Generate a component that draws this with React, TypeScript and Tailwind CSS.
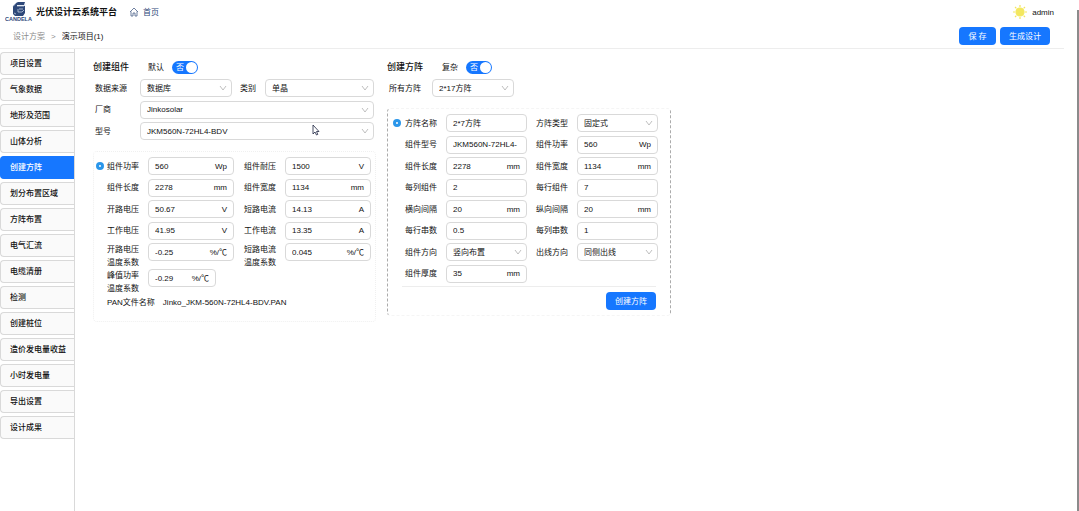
import React, { useState } from "react";

const navItems = [
  "项目设置", "气象数据", "地形及范围", "山体分析", "创建方阵", "划分布置区域", "方阵布置", "电气汇流",
  "电缆清册", "检测", "创建桩位", "造价发电量收益", "小时发电量", "导出设置", "设计成果",
];

type FieldData = { label: string; value: string; unit?: string; select?: boolean };

const moduleFields: FieldData[] = [
  { label: "组件功率", value: "560", unit: "Wp" },
  { label: "组件耐压", value: "1500", unit: "V" },
  { label: "组件长度", value: "2278", unit: "mm" },
  { label: "组件宽度", value: "1134", unit: "mm" },
  { label: "开路电压", value: "50.67", unit: "V" },
  { label: "短路电流", value: "14.13", unit: "A" },
  { label: "工作电压", value: "41.95", unit: "V" },
  { label: "工作电流", value: "13.35", unit: "A" },
];

const coefficientFields: FieldData[] = [
  { label: "开路电压温度系数", value: "-0.25", unit: "%/℃" },
  { label: "短路电流温度系数", value: "0.045", unit: "%/℃" },
  { label: "峰值功率温度系数", value: "-0.29", unit: "%/℃" },
];

const arrayFields: FieldData[] = [
  { label: "方阵名称", value: "2*7方阵" },
  { label: "方阵类型", value: "固定式", select: true },
  { label: "组件型号", value: "JKM560N-72HL4-" },
  { label: "组件功率", value: "560", unit: "Wp" },
  { label: "组件长度", value: "2278", unit: "mm" },
  { label: "组件宽度", value: "1134", unit: "mm" },
  { label: "每列组件", value: "2" },
  { label: "每行组件", value: "7" },
  { label: "横向间隔", value: "20", unit: "mm" },
  { label: "纵向间隔", value: "20", unit: "mm" },
  { label: "每行串数", value: "0.5" },
  { label: "每列串数", value: "1" },
  { label: "组件方向", value: "竖向布置", select: true },
  { label: "出线方向", value: "同侧出线", select: true },
  { label: "组件厚度", value: "35", unit: "mm" },
];

function SelectBox({ id, value, className = "" }: { id: string; value: string; className?: string }) {
  return (
    <div className={"relative " + className}>
      <select
        id={id}
        className="block h-[18px] w-full appearance-none rounded border border-[#d9d9d9] bg-white pl-1.5 pr-3 outline-none"
      >
        <option>{value}</option>
      </select>
      <svg
        viewBox="0 0 8 6"
        className="pointer-events-none absolute right-[5px] top-1/2 h-[6px] w-2 -translate-y-1/2"
        fill="none"
        stroke="#b8b8b8"
        strokeWidth="0.9"
      >
        <path d="M1 1l3 4 3-4" />
      </svg>
    </div>
  );
}

function TextBox({ id, value, unit, className = "" }: { id: string; value: string; unit?: string; className?: string }) {
  return (
    <div className={"flex h-[18px] items-center rounded border border-[#d9d9d9] bg-white px-1.5 " + className}>
      <input id={id} defaultValue={value} className="w-0 min-w-0 flex-1 bg-transparent outline-none" />
      {unit && <span>{unit}</span>}
    </div>
  );
}

function Field({ id, field }: { id: string; field: FieldData }) {
  return (
    <div className="flex items-center">
      <label htmlFor={id} className="w-[41px] shrink-0">{field.label}</label>
      {field.select ? (
        <SelectBox id={id} value={field.value} className="flex-1" />
      ) : (
        <TextBox id={id} value={field.value} unit={field.unit} className="flex-1" />
      )}
    </div>
  );
}

function Toggle({ label }: { label: string }) {
  const [off, setOff] = useState(true);
  return (
    <label className="flex items-center gap-2">
      {label}
      <input type="checkbox" checked={off} onChange={() => setOff(!off)} className="sr-only" />
      <span className="flex h-[13px] w-[26px] items-center justify-between rounded-full bg-[#1677ff] pl-1 pr-px text-white">
        {off ? "否" : "是"}
        <span className="size-[11px] rounded-full bg-white" />
      </span>
    </label>
  );
}

function Radio({ label, name }: { label: string; name: string }) {
  return (
    <input
      type="radio"
      name={name}
      defaultChecked
      aria-label={label}
      className="mt-[5px] size-2 shrink-0 appearance-none rounded-full border-[3px] border-[#2a96ea] bg-white"
    />
  );
}

function Logo() {
  return (
    <svg viewBox="0 0 28 22" className="h-[22px] w-7" role="img" aria-label="CANDELA">
      <path d="M11 2l2-1h7l-1 3h-7v1h8v7l-2 3h-8l-2-2V5z" fill="#2e4879" />
      <path d="M8 5.500L11 2M12 5h7l1-2M14 8h4M13 8v3h4l2-2M9 12l2 1" fill="none" stroke="#c3cee0" strokeWidth="0.8" />
      <text x="0" y="20" fontSize="5.5" fontWeight="700" fill="#2e4879">CANDELA</text>
    </svg>
  );
}

function Sun() {
  return (
    <svg viewBox="0 0 14 14" className="size-3.5" stroke="#f3e75f" strokeWidth="1.2">
      <circle cx="7" cy="7" r="4" fill="#f3e75f" />
      <path d="M7 0v2M7 12v2M0 7h2M12 7h2M2 2l1.4 1.4M10.6 10.6L12 12M2 12l1.4-1.4M10.6 3.4L12 2" />
    </svg>
  );
}

export default function App() {
  const [active, setActive] = useState(4);
  return (
    <div className="relative flex min-h-screen flex-col bg-white font-['Liberation_Sans','Noto_Sans_CJK_SC',sans-serif] text-[8px] leading-[13px] text-[#111111]">
      <div className="mr-[15px] border-b border-[#ededed]">
        <header className="flex h-6 items-center pl-[5px]">
          <Logo />
          <h1 className="ml-[3px] text-[9px] font-bold">光伏设计云系统平台</h1>
          <a href="#home" className="ml-3 flex items-center gap-1 text-[#2e4879]">
            <svg viewBox="0 0 10 10" className="size-2.5" fill="none" stroke="#4a5f88" strokeWidth="0.8">
              <path d="M1 5l4-4 4 4M2 4.5V9h2V6h2v3h2V4.5" />
            </svg>
            首页
          </a>
          <div className="ml-auto flex items-center gap-[5px] pr-[10px]">
            <Sun />
            <span>admin</span>
          </div>
        </header>
        <div className="flex h-6 items-center pl-[13px] pr-3.5">
          <nav className="flex gap-1.5" aria-label="路径">
            <a href="#plans" className="text-[#8c8c8c]">设计方案</a>
            <span className="text-[#8c8c8c]">&gt;</span>
            <span>演示项目(1)</span>
          </nav>
          <div className="ml-auto flex gap-1 text-white">
            <button className="h-[18px] w-[37px] rounded bg-[#1677ff]">保 存</button>
            <button className="h-[18px] w-[50px] rounded bg-[#1677ff]">生成设计</button>
          </div>
        </div>
      </div>

      <div className="flex flex-1">
        <nav className="flex w-[75px] shrink-0 flex-col gap-[3px] border-r border-[#d9d9d9] pt-[3px]">
          {navItems.map((item, i) => (
            <button
              key={item}
              onClick={() => setActive(i)}
              className={
                "h-[23px] whitespace-nowrap rounded-l border border-r-0 pl-[9px] text-left font-medium " +
                (i === active ? "border-[#1677ff] bg-[#1677ff] text-white" : "border-[#d9d9d9] bg-[#fafafa]")
              }
            >
              {item}
            </button>
          ))}
        </nav>

        <main className="flex flex-1 items-start gap-[11px] pl-[18px] pt-[11px]">
          <section className="relative w-[283px]">
            <div className="flex h-[15px] items-center gap-[19px]">
              <h2 className="text-[9px] font-medium">创建组件</h2>
              <Toggle label="默认" />
            </div>
            <div className="mt-1 grid min-h-[61px] grid-cols-[37px_92px_17px_109px] content-between items-center gap-x-2 pl-[2px]">
              <label htmlFor="source">数据来源</label>
              <SelectBox id="source" value="数据库" />
              <label htmlFor="kind">类别</label>
              <SelectBox id="kind" value="单晶" />
              <label htmlFor="vendor">厂商</label>
              <SelectBox id="vendor" value="Jinkosolar" className="col-span-3" />
              <label htmlFor="model">型号</label>
              <SelectBox id="model" value="JKM560N-72HL4-BDV" className="col-span-3" />
            </div>
            <svg viewBox="0 0 8 12" className="pointer-events-none absolute left-[219px] top-[64px] h-3 w-2" fill="#fff" stroke="#1c2340" strokeWidth="0.8">
              <path d="M1 1v9l2-2 1.5 3 1.3-.6L4.500 7.500H7z" />
            </svg>
            <div className="mt-[11px] flex gap-[3px] rounded border border-dotted border-[#f0f0f0] px-[2px] pb-3 pt-[5px]">
              <Radio name="module" label="组件" />
              <div className="w-[264px]">
                <div className="grid min-h-[83px] grid-cols-2 content-between gap-x-[10px]">
                  {moduleFields.map((f, i) => (
                    <Field key={f.label} id={"module-" + i} field={f} />
                  ))}
                </div>
                <div className="mt-[3px] grid grid-cols-2 gap-x-[10px]">
                  {coefficientFields.map((f, i) => (
                    <div key={f.label} className="flex items-start">
                      <label htmlFor={"coefficient-" + i} className="w-[41px] shrink-0 pr-2">{f.label}</label>
                      <TextBox
                        id={"coefficient-" + i}
                        value={f.value}
                        unit={f.unit}
                        className={i === 2 ? "w-[68px]" : "flex-1"}
                      />
                    </div>
                  ))}
                </div>
                <p className="mt-[1px] flex gap-2 whitespace-nowrap">
                  <span>PAN文件名称</span>
                  <span>Jinko_JKM-560N-72HL4-BDV.PAN</span>
                </p>
              </div>
            </div>
          </section>

          <section className="w-[284px]">
            <div className="flex h-[15px] items-center gap-[19px]">
              <h2 className="text-[9px] font-medium">创建方阵</h2>
              <Toggle label="复杂" />
            </div>
            <div className="mt-1 flex items-center gap-[11px] pl-[2px]">
              <label htmlFor="existing">所有方阵</label>
              <SelectBox id="existing" value="2*17方阵" className="w-[82px]" />
            </div>
            <div className="mt-[11px] rounded border border-dashed border-x-[#ababab] border-y-[#f5f5f5] pb-[5px] pl-[5px] pr-3 pt-[5px]">
              <div className="flex gap-1">
                <Radio name="array" label="方阵" />
                <div className="grid min-h-[169px] flex-1 grid-cols-2 content-between gap-x-[9px]">
                  {arrayFields.map((f, i) => (
                    <Field key={i} id={"array-" + i} field={f} />
                  ))}
                </div>
              </div>
              <div className="ml-[9px] mr-[2px] mt-[3px] flex justify-end border-t border-[#ededed] pt-[5px]">
                <button className="h-[18px] w-[50px] rounded bg-[#1677ff] text-white">创建方阵</button>
              </div>
            </div>
          </section>
        </main>
      </div>

      <div className="absolute bottom-0 right-0 top-[10px] w-[2px] bg-[#8b8b8b]" />
    </div>
  );
}
